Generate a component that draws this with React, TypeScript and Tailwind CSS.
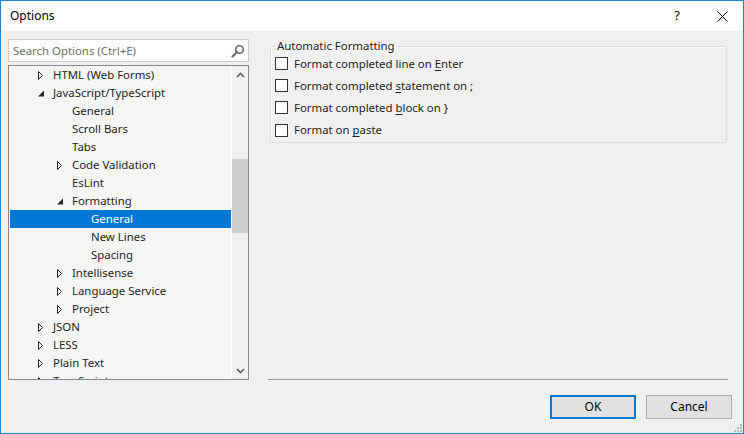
import React from "react";

type Node = {
  label: string;
  level: number;
  state?: "open" | "closed";
  selected?: boolean;
};

const nodes: Node[] = [
  { label: "HTML (Web Forms)", level: 0, state: "closed" },
  { label: "JavaScript/TypeScript", level: 0, state: "open" },
  { label: "General", level: 1 },
  { label: "Scroll Bars", level: 1 },
  { label: "Tabs", level: 1 },
  { label: "Code Validation", level: 1, state: "closed" },
  { label: "EsLint", level: 1 },
  { label: "Formatting", level: 1, state: "open" },
  { label: "General", level: 2, selected: true },
  { label: "New Lines", level: 2 },
  { label: "Spacing", level: 2 },
  { label: "Intellisense", level: 1, state: "closed" },
  { label: "Language Service", level: 1, state: "closed" },
  { label: "Project", level: 1, state: "closed" },
  { label: "JSON", level: 0, state: "closed" },
  { label: "LESS", level: 0, state: "closed" },
  { label: "Plain Text", level: 0, state: "closed" },
  { label: "TypeScript", level: 0, state: "closed" },
];

// tree indentation per level
const indent = ["pl-[27px]", "pl-[46px]", "pl-[65px]"];

const Arrow = ({ state, selected }: { state?: "open" | "closed"; selected?: boolean }) => {
  if (!state) return <span className="w-[9px] shrink-0" />;
  if (state === "open")
    return (
      <svg width="9" height="18" viewBox="0 0 9 18" className="shrink-0">
        <polygon points="7,6.5 7,12.5 1,12.5" fill={selected ? "#fff" : "#262626"} />
      </svg>
    );
  return (
    <svg width="9" height="18" viewBox="0 0 9 18" className="shrink-0">
      <polygon points="1.5,5.5 5.5,9.5 1.5,13.5" fill="none" stroke={selected ? "#fff" : "#262626"} strokeWidth="1" />
    </svg>
  );
};

const TreeRow = ({ node }: { node: Node }) => (
  <div
    className={`flex h-[18px] items-center gap-[7px] whitespace-nowrap ${indent[node.level]} ${
      node.selected ? "bg-[#0078d7] text-white" : "text-[#1e1e1e]"
    }`}
  >
    <Arrow state={node.state} selected={node.selected} />
    <span className="leading-[18px]">{node.label}</span>
  </div>
);

const Check = ({ before, key1, after }: { before: string; key1: string; after: string }) => (
  <label className="flex h-[22.3px] items-center gap-[6px] text-[#1e1e1e]">
    <span className="h-[13px] w-[13px] shrink-0 border border-[#333333] bg-white" />
    <span>
      {before}
      <span className="underline underline-offset-2">{key1}</span>
      {after}
    </span>
  </label>
);

export default function App() {
  return (
    <div
      className="flex h-[434px] w-[744px] flex-col border border-[#1883d7] bg-[#f0f0f0] text-[11.4px]"
      style={{ fontFamily: '"Noto Sans", "Liberation Sans", sans-serif' }}
    >
      {/* title bar */}
      <div className="flex h-[30px] shrink-0 items-center bg-white pl-[9px] text-[12px]">
        <span className="flex-1 text-black">Options</span>
        <span className="w-[16px] text-center text-[13px] text-black">?</span>
        <span className="flex w-[58px] justify-center pl-[16px]">
          <svg width="11" height="11" viewBox="0 0 11 11">
            <path d="M0.5 0.5 L10.5 10.5 M10.5 0.5 L0.5 10.5" stroke="#000" strokeWidth="1" />
          </svg>
        </span>
      </div>

      <div className="flex h-[349px] shrink-0 pt-[8px]">
        {/* left column */}
        <div className="ml-[7px] flex w-[241px] flex-col gap-[3px]">
          <div className="flex h-[23px] items-center border border-[#cccccc] bg-white pl-[4px] pr-[3px]">
            <span className="flex-1 text-[#6d6d6d]">Search Options (Ctrl+E)</span>
            <svg width="14" height="14" viewBox="0 0 14 14">
              <circle cx="8.5" cy="5.5" r="3.8" fill="none" stroke="#6b6b6b" strokeWidth="1.6" />
              <path d="M6 8 L1.5 12.5" stroke="#6b6b6b" strokeWidth="2.2" strokeLinecap="round" />
            </svg>
          </div>
          <div className="flex h-[315px] border border-[#828790] bg-[#f5f5f5]">
            <div className="flex-1 overflow-hidden pl-[1px]">
              {nodes.map((n, i) => (
                <TreeRow key={i} node={n} />
              ))}
            </div>
            <div className="flex w-[17px] flex-col border-l border-white bg-[#f0f0f0]">
              <div className="flex h-[17px] items-center justify-center">
                <svg width="9" height="6" viewBox="0 0 9 6">
                  <path d="M1 5 L4.5 1.5 L8 5" fill="none" stroke="#606060" strokeWidth="1.6" />
                </svg>
              </div>
              <div className="flex-1 pt-[76px]">
                <div className="h-[74px] bg-[#cdcdcd]" />
              </div>
              <div className="flex h-[17px] items-center justify-center">
                <svg width="9" height="6" viewBox="0 0 9 6">
                  <path d="M1 1 L4.5 4.5 L8 1" fill="none" stroke="#606060" strokeWidth="1.6" />
                </svg>
              </div>
            </div>
          </div>
        </div>

        {/* right column */}
        <div className="ml-[19px] flex w-[460px] flex-col">
          <fieldset className="ml-[2px] mr-[1px] rounded-[3px] border border-[#d5dfe5] pb-[1px] pl-[4px] shadow-[inset_1px_1px_0_#ffffff]">
            <legend className="px-[2px] leading-[14px] text-[#1e1e1e]">Automatic Formatting</legend>
            <div className="-mt-[1px]">
              <Check before="Format completed line on " key1="E" after="nter" />
              <Check before="Format completed " key1="s" after="tatement on ;" />
              <Check before="Format completed " key1="b" after="lock on }" />
              <Check before="Format on " key1="p" after="aste" />
            </div>
          </fieldset>
          <div className="flex-1" />
          <div className="h-[1px] bg-[#a0a0a0]" />
        </div>
      </div>

      {/* buttons */}
      <div className="relative flex flex-1 justify-end gap-[10px] pr-[11px] pt-[15px] text-[12px]">
        <button className="h-[24px] w-[86px] border-2 border-[#0078d7] bg-[#e1e1e1] text-black">OK</button>
        <button className="h-[24px] w-[86px] border border-[#adadad] bg-[#e1e1e1] text-black">Cancel</button>
        <svg width="10" height="10" viewBox="0 0 10 10" className="absolute bottom-[1px] right-[1px]">
          {[
            [8, 2],
            [8, 5],
            [5, 5],
            [8, 8],
            [5, 8],
            [2, 8],
          ].map(([x, y], i) => (
            <rect key={i} x={x} y={y} width="2" height="2" fill="#b8b8b8" />
          ))}
        </svg>
      </div>
    </div>
  );
}
